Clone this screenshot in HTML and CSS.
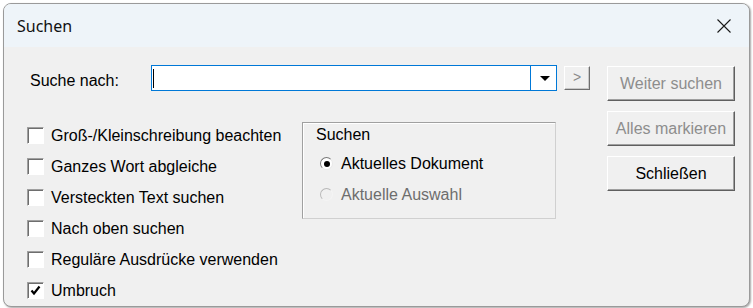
FILE: index.html
```html
<!DOCTYPE html>
<html lang="de">
<head>
    <meta charset="UTF-8">
    <meta name="viewport" content="width=device-width, initial-scale=1.0">
    <title>Suchen</title>
    <link rel="stylesheet" href="styles.css">
</head>
<body>

    <div class="window">
        <div class="titlebar">
            <span class="title">Suchen</span>
            <svg class="close" width="14" height="14" viewBox="0 0 14 14">
                <path d="M0.5 0.5 L13.5 13.5 M13.5 0.5 L0.5 13.5" stroke="#1a1a1a" stroke-width="1.1" fill="none"/>
            </svg>
        </div>

        <div class="content">
            <div class="main">
                <div class="search-row">
                    <label class="search-label">Suche nach:</label>
                    <div class="combo">
                        <div class="field"><span class="caret"></span></div>
                        <div class="drop"><span class="triangle"></span></div>
                    </div>
                    <div class="small-button">&gt;</div>
                </div>

                <div class="options">
                    <div class="checks">
                        <div class="check-row"><span class="box"></span>Groß-/Kleinschreibung beachten</div>
                        <div class="check-row"><span class="box"></span>Ganzes Wort abgleiche</div>
                        <div class="check-row"><span class="box"></span>Versteckten Text suchen</div>
                        <div class="check-row"><span class="box"></span>Nach oben suchen</div>
                        <div class="check-row"><span class="box"></span>Reguläre Ausdrücke verwenden</div>
                        <div class="check-row">
                            <span class="box">
                                <svg width="11" height="11" viewBox="0 0 11 11">
                                    <path d="M1.5 5.5 L4 8.5 L9.5 1.5" stroke="#000" stroke-width="2.2" fill="none"/>
                                </svg>
                            </span>Umbruch
                        </div>
                    </div>

                    <div class="group">
                        <div class="legend">Suchen</div>
                        <div class="radio-row"><span class="radio checked"></span>Aktuelles Dokument</div>
                        <div class="radio-row disabled"><span class="radio"></span>Aktuelle Auswahl</div>
                    </div>
                </div>
            </div>

            <div class="buttons">
                <div class="button disabled">Weiter suchen</div>
                <div class="button disabled">Alles markieren</div>
                <div class="button">Schließen</div>
            </div>
        </div>
    </div>

</body>
</html>
```

FILE: styles.css
```css
html {
    background-color: #ffffff;
}
body {
    margin: 0;
    padding: 3px;
    font-family: "Liberation Sans", Arial, sans-serif;
    font-size: 16px;
    color: #000;
}
.window {
    width: 745px;
    height: 302px;
    border: 1px solid #9a9a9a;
    border-radius: 8px;
    overflow: hidden;
    background-color: #f0f0f0;
    box-shadow: 1px 1px 2px rgba(0, 0, 0, 0.35);
    display: flex;
    flex-direction: column;
}
.titlebar {
    height: 43px;
    background-color: #eef4f9;
    display: flex;
    align-items: center;
    justify-content: space-between;
    padding: 0 18px 0 13px;
}
.title {
    font-family: "Noto Sans", sans-serif;
    font-size: 16px;
    color: #111;
}
.close {
    display: block;
}
.content {
    display: flex;
    padding: 18px 0 0 23px;
}
.main {
    display: flex;
    flex-direction: column;
}
.search-row {
    display: flex;
    align-items: flex-start;
    height: 26px;
}
.search-label {
    width: 121px;
    padding: 3px 0 0 3px;
    line-height: 26px;
}
.combo {
    width: 404px;
    height: 24px;
    border: 1px solid #0078d7;
    display: flex;
    background-color: #fff;
}
.field {
    flex: 1;
    display: flex;
    align-items: center;
    padding-left: 1px;
}
.caret {
    width: 1px;
    height: 19px;
    background-color: #000;
}
.drop {
    width: 25px;
    border-left: 1px solid #0078d7;
    display: flex;
    align-items: center;
    justify-content: center;
}
.triangle {
    width: 0;
    height: 0;
    border-left: 5px solid transparent;
    border-right: 5px solid transparent;
    border-top: 5px solid #000;
    margin-left: 2px;
}
.small-button {
    width: 24px;
    height: 22px;
    margin: 1px 0 0 7px;
    border: 1px solid;
    border-color: #fff #6e6e6e #6e6e6e #fff;
    box-shadow: inset -1px -1px 0 #c8c8c8;
    color: #8a8a8a;
    font-size: 14px;
    line-height: 21px;
    text-align: center;
}
.options {
    display: flex;
    margin-top: 29px;
}
.checks {
    width: 275px;
}
.check-row {
    height: 31px;
    display: flex;
    align-items: center;
}
.box {
    width: 15px;
    height: 15px;
    border: 1px solid;
    border-color: #a0a0a0 #fff #fff #a0a0a0;
    box-shadow: inset 1px 1px 0 #6e6e6e;
    background-color: #fff;
    margin-right: 7px;
    display: flex;
    align-items: center;
    justify-content: center;
    flex-shrink: 0;
}
.group {
    width: 252px;
    height: 95px;
    margin-top: 2px;
    border: 1px solid;
    border-color: #a0a0a0 #d0d0d0 #d0d0d0 #a0a0a0;
    box-shadow: inset 1px 1px 0 #fff;
}
.legend {
    height: 25px;
    line-height: 24px;
    padding-left: 13px;
}
.radio-row {
    height: 31px;
    display: flex;
    align-items: center;
    padding-left: 17px;
}
.radio-row.disabled {
    color: #6d6d6d;
}
.radio {
    width: 11px;
    height: 11px;
    border-radius: 50%;
    border: 1px solid;
    border-color: #7a7a7a #e8e8e8 #e8e8e8 #7a7a7a;
    background-color: #fff;
    margin-right: 8px;
    display: flex;
    align-items: center;
    justify-content: center;
}
.radio.checked::after {
    content: "";
    width: 6px;
    height: 6px;
    border-radius: 50%;
    background-color: #000;
}
.radio-row.disabled .radio {
    border-color: #b8b8b8 #f4f4f4 #f4f4f4 #b8b8b8;
    background-color: #f0f0f0;
}
.buttons {
    display: flex;
    flex-direction: column;
    gap: 10px;
    margin: 1px 0 0 17px;
}
.button {
    width: 126px;
    height: 33px;
    border: 1px solid;
    border-color: #fff #5f5f5f #5f5f5f #fff;
    box-shadow: inset -1px -1px 0 #a0a0a0;
    line-height: 33px;
    text-align: center;
}
.button.disabled {
    color: #8d8d8d;
}
```
